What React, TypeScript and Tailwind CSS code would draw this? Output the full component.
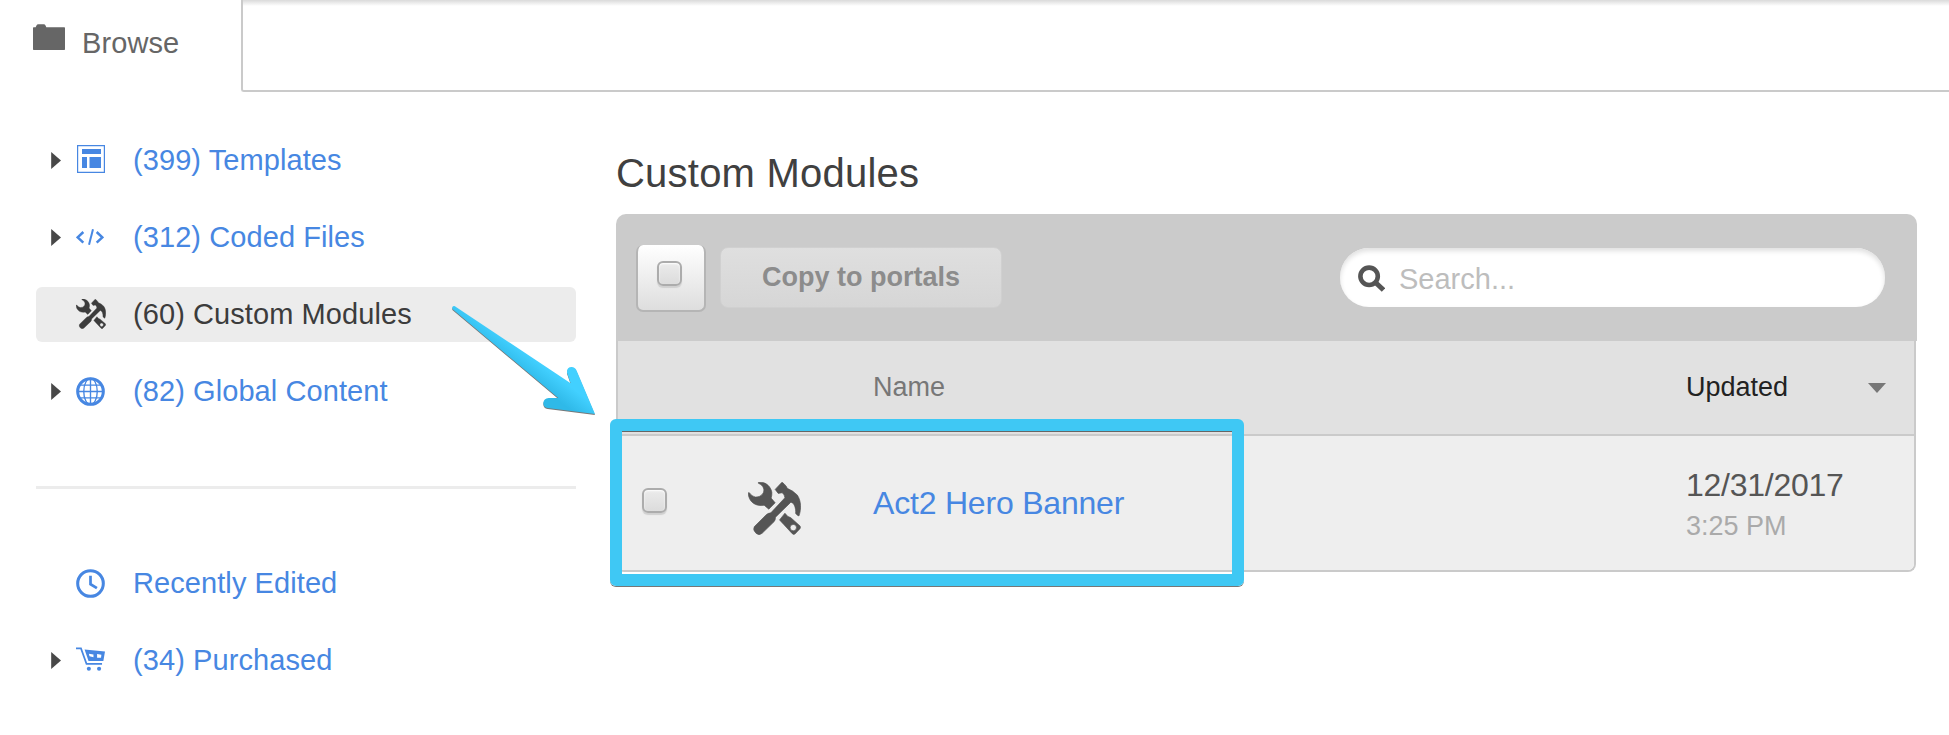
import type { ReactNode } from "react";

function ToolsIcon({ className }: { className: string }) {
  return (
    <svg viewBox="443 215 158 158" className={className} fill="currentColor" stroke="currentColor" strokeWidth="2" strokeLinejoin="round">
      <path d="M474 216 C493 213 510 226 514 245 Q515 254 512 263 L524 277 L505 296 L491 284 C468 290 443 274 444 247 L447 247 Q455 259 466 260 Q480 260 487 250 C494 240 490 225 474 219 Z" />
      <path d="M544 216 Q547 216 558 229 L560 234 Q576 240 590 254 C602 272 602 296 595 316 Q592 317 585 309 C586 294 582 278 571 275 L525 320 Q525 328 521 333 L485 368 Q476 376 467 368 Q456 358 462 348 L498 312 Q503 308 511 307 L553 262 Q552 252 545 247 L533 249 L524 237 Z" />
      <path fillRule="evenodd" d="M553 308 L562 318 L570 321 L598 346 Q601 350 598 354 L583 370 Q579 373 575 369 L549 341 L537 328 Z M587.5 351 a9.5 9.5 0 1 0 -19 0 a9.5 9.5 0 1 0 19 0 Z" />
    </svg>
  );
}

function FolderIcon() {
  return (
    <svg viewBox="0 0 96 78" className="h-[26px] w-8 shrink-0" fill="#666666">
      <path d="M2 10 H8 L10 5 Q12 1 16 1 H32 Q36 1 38 5 L40 10 H94 Q96 10 96 12 V76 Q96 78 94 78 H2 Q0 78 0 76 V12 Q0 10 2 10 Z" />
    </svg>
  );
}

function TemplateIcon() {
  return (
    <svg viewBox="0 0 28 28" className="mb-[3px] ml-px size-7" fill="currentColor">
      <path d="M0.5 0.5 H27.5 V27.5 H0.5 Z" fill="none" stroke="currentColor" strokeWidth="1.4" />
      <path d="M5 4 H24 V9 H5 Z M5 12 H10 V23 H5 Z M12.5 12 H24 V23 H12.5 Z" />
    </svg>
  );
}

function CodeIcon() {
  return (
    <svg viewBox="0 0 84 48" className="mt-[-2px] h-4 w-7" fill="none" stroke="currentColor" strokeWidth="7.5">
      <path d="M22 9 L5 25 L22 41 M62 9 L79 25 L62 41" />
      <path d="M51 1 L39 47" strokeWidth="6" />
    </svg>
  );
}

function GlobeIcon() {
  return (
    <svg viewBox="0 0 86 86" className="size-[29px]" fill="none" stroke="currentColor" strokeWidth="4">
      <circle cx="43" cy="43" r="38" strokeWidth="9" />
      <path d="M43 4 V82 M4 43 H82 M12 24 H74 M12 62 H74" />
      <ellipse cx="43" cy="43" rx="20" ry="39" />
    </svg>
  );
}

function ClockIcon() {
  return (
    <svg viewBox="0 0 86 86" className="mb-px size-[29px]" fill="none" stroke="currentColor" strokeWidth="8">
      <circle cx="43" cy="43" r="38" strokeWidth="9" />
      <path d="M43 20 V45 L62 57" />
    </svg>
  );
}

function CartIcon() {
  return (
    <svg viewBox="138 563 88 72" className="mb-[3px] h-6 w-[29px]" fill="currentColor">
      <path d="M138 566.5 H153 L170 614 H217" fill="none" stroke="currentColor" strokeWidth="5.5" />
      <path fillRule="evenodd" d="M164 570 L226 576 L221 605 H176 Z M177 583 L179 591 L191 594 L191 585 Z M202 584 L202 595 L214 595 L215 586 Z" />
      <circle cx="177" cy="628.5" r="6.2" />
      <circle cx="208" cy="628.5" r="6.2" />
    </svg>
  );
}

function NavItem({ icon, label, caret = true, active = false }: { icon: ReactNode; label: string; caret?: boolean; active?: boolean }) {
  return (
    <li
      className={
        active
          ? "flex h-[55px] items-center rounded-md bg-[#ececec] text-[#3c3c3c]"
          : "flex h-[55px] items-center text-[#4787e2]"
      }
    >
      <span className="flex w-10 shrink-0 pl-[15px]">
        {caret && (
          <svg viewBox="0 0 10 17" className="mb-px h-[17px] w-2.5" fill="#484848">
            <path d="M0.2 0 L10 8.5 L0.2 17 Z" />
          </svg>
        )}
      </span>
      <span className="flex w-[57px] shrink-0 items-center">{icon}</span>
      <span className="whitespace-nowrap tracking-[0.08px]">{label}</span>
    </li>
  );
}

function Checkbox() {
  return (
    <span className="block size-[25px] rounded-[6px] border-2 border-[#acacac] bg-linear-to-b from-[#ebebeb] to-[#dcdcdc] shadow-[0_2px_1px_#d0d0d0,inset_0_1px_2px_#fff]" />
  );
}

export default function App() {
  return (
    <div className="relative flex h-[735px] w-[1949px] flex-col overflow-hidden bg-white font-['Liberation_Sans',Arial,sans-serif] text-[29px] leading-none">
      <header className="flex h-[92px] shrink-0">
        <div className="flex w-[241px] shrink-0 gap-[17px] pl-[33px] text-[#666666]">
          <span className="pt-6">
            <FolderIcon />
          </span>
          <span className="pt-[29px] tracking-[0.1px]">Browse</span>
        </div>
        <div className="flex-1 rounded-bl-[3px] border-b-2 border-l-2 border-[#cacaca] bg-linear-to-b from-[#dadada] to-white to-[6px]" />
      </header>

      <div className="flex flex-1">
        <nav className="ml-9 w-[540px] shrink-0 pt-[41px]">
          <ul className="flex flex-col gap-[22px]">
            <NavItem icon={<TemplateIcon />} label="(399) Templates" />
            <NavItem icon={<CodeIcon />} label="(312) Coded Files" />
            <NavItem icon={<ToolsIcon className="mb-px size-[30px]" />} label="(60) Custom Modules" caret={false} active />
            <NavItem icon={<GlobeIcon />} label="(82) Global Content" />
          </ul>
          <div className="mt-[67px] mb-[67px] h-[3px] bg-[#ececec]" />
          <ul className="flex flex-col gap-[22px]">
            <NavItem icon={<ClockIcon />} label="Recently Edited" caret={false} />
            <NavItem icon={<CartIcon />} label="(34) Purchased" />
          </ul>
        </nav>

        <main className="ml-10 w-[1301px] shrink-0 pt-[59px]">
          <h1 className="h-[63px] text-[40px] leading-[44px] tracking-[0.22px] text-[#404040]">Custom Modules</h1>
          <div className="flex h-[127px] items-start rounded-t-[10px] bg-[#cbcbcb] pr-8 pl-5">
            <button className="mt-[31px] flex h-[67px] w-[70px] justify-center rounded-[7px] border-2 border-t-0 border-[#b5b5b5] bg-linear-to-b from-white to-[#dedede] pt-4 pr-[3px]">
              <Checkbox />
            </button>
            <button className="mt-[33px] ml-[14px] h-[61px] w-[282px] rounded-lg border border-[#d0d0d0] bg-linear-to-b from-[#dfdfdf] to-[#d6d6d6] text-[27px] font-bold text-[#8c8c8c]">
              Copy to portals
            </button>
            <div className="mt-[34px] ml-auto flex h-[59px] w-[545px] items-center rounded-[29px] bg-white pl-[18px] shadow-[inset_0_3px_5px_#e0e0e0]">
              <svg viewBox="0 0 27 27" className="mt-0.5 size-[27px]" fill="none" stroke="#555555">
                <circle cx="11.1" cy="11.3" r="8.7" strokeWidth="4.6" />
                <path d="M17.5 17.5 L25.5 25" strokeWidth="5" />
              </svg>
              <span className="ml-[14px] pt-1 text-[#bdbdbd]">Search...</span>
            </div>
          </div>
          <div className="w-[1300px] overflow-hidden rounded-b-lg border-x-2 border-b-2 border-[#cacaca]">
            <div className="flex h-[95px] items-center border-b-2 border-[#cacaca] bg-[#e1e1e1] pl-[255px] text-[27px]">
              <span className="w-[813px] text-[#777777]">Name</span>
              <span className="text-[#222222]">Updated</span>
              <svg viewBox="0 0 18 10" className="mr-[28px] ml-auto h-[10px] w-[18px]" fill="#777777">
                <path d="M0 0 H18 L9 10 Z" />
              </svg>
            </div>
            <div className="flex h-[134px] bg-[#eeeeee]">
              <span className="w-[130px] pt-[52px] pl-6">
                <Checkbox />
              </span>
              <span className="w-[125px] pt-[46px] text-[#555555]">
                <ToolsIcon className="size-[53px]" />
              </span>
              <a className="w-[813px] pt-[51px] text-[32px] tracking-[-0.2px] text-[#4787e2]">Act2 Hero Banner</a>
              <div className="pt-[33px]">
                <div className="text-[32px] tracking-[-0.25px] text-[#555555]">12/31/2017</div>
                <div className="mt-[12px] text-[27px] text-[#aaaaaa]">3:25 PM</div>
              </div>
            </div>
          </div>
        </main>
      </div>

      <div className="absolute top-[419px] left-[610px] h-[167px] w-[634px] rounded-md border-12 border-[#3fc8f4] shadow-[0_1px_0_#777,inset_0_1px_0_#666]" />
      <svg viewBox="0 0 720 600" className="absolute top-[280px] left-[420px] h-[200px] w-[240px]">
        <defs>
          <linearGradient id="arrow" gradientUnits="userSpaceOnUse" x1="392" y1="345" x2="426" y2="300">
            <stop offset="0" stopColor="#2fb9e8" />
            <stop offset="1" stopColor="#42d0ff" />
          </linearGradient>
        </defs>
        <path transform="translate(0 3)" fill="#777777" d="M98 88 Q95 83 99 79 Q103 76 108 81 L452 310 L441 278 Q440 261 455 261 Q465 261 470 272 L525 402 L383 384 Q370 382 370 369 Q371 356 386 354 L415 354 Z" />
        <path fill="url(#arrow)" d="M98 88 Q95 83 99 79 Q103 76 108 81 L452 310 L441 278 Q440 261 455 261 Q465 261 470 272 L525 402 L383 384 Q370 382 370 369 Q371 356 386 354 L415 354 Z" />
      </svg>
    </div>
  );
}
